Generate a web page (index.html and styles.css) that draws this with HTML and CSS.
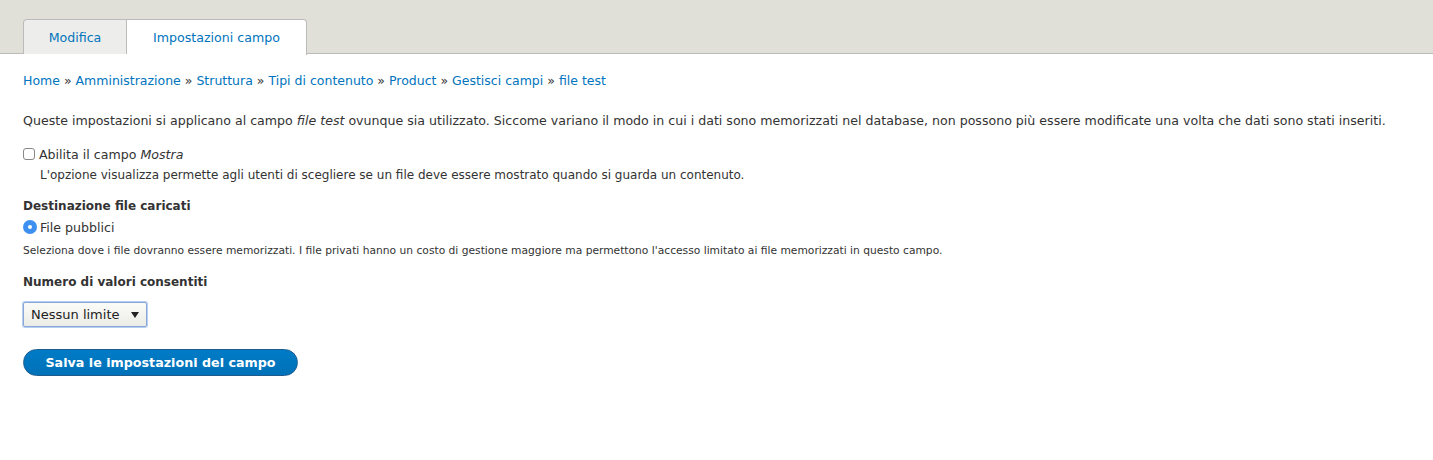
FILE: index.html
```html
<!DOCTYPE html>
<html lang="it">
<head>
<meta charset="utf-8">
<title>file test</title>
<link rel="stylesheet" href="styles.css">
</head>
<body>
<header class="head">
  <ul class="tabs">
    <li class="tab"><a href="#">Modifica</a></li>
    <li class="tab active"><a href="#">Impostazioni campo</a></li>
  </ul>
</header>
<main class="page">
  <nav class="crumbs"><a href="#">Home</a> » <a href="#">Amministrazione</a> » <a href="#">Struttura</a> » <a href="#">Tipi di contenuto</a> » <a href="#">Product</a> » <a href="#">Gestisci campi</a> » <a href="#">file test</a></nav>
  <p class="intro">Queste impostazioni si applicano al campo <em>file test</em> ovunque sia utilizzato. Siccome variano il modo in cui i dati sono memorizzati nel database, non possono più essere modificate una volta che dati sono stati inseriti.</p>
  <div class="item">
    <label class="check"><span class="box"></span>Abilita il campo <em>Mostra</em></label>
    <div class="desc indent">L'opzione visualizza permette agli utenti di scegliere se un file deve essere mostrato quando si guarda un contenuto.</div>
  </div>
  <div class="item">
    <div class="title">Destinazione file caricati</div>
    <label class="check"><span class="radio"></span>File pubblici</label>
    <div class="desc small">Seleziona dove i file dovranno essere memorizzati. I file privati hanno un costo di gestione maggiore ma permettono l'accesso limitato ai file memorizzati in questo campo.</div>
  </div>
  <div class="item">
    <div class="title">Numero di valori consentiti</div>
    <div class="select"><span>Nessun limite</span><span class="caret"></span></div>
  </div>
  <button class="save" type="button">Salva le impostazioni del campo</button>
</main>
</body>
</html>
```
FILE: styles.css
```css
* { box-sizing: border-box; }
body {
  margin: 0;
  font-family: "DejaVu Sans", Verdana, sans-serif;
  font-size: 12.6px;
  color: #333;
  background: #fff;
}
a { color: #0074bd; text-decoration: none; }
.head {
  background: #e0e0d8;
  border-bottom: 1px solid #bbb;
  height: 54px;
  padding: 19px 23px 0;
}
.tabs {
  list-style: none;
  margin: 0;
  padding: 0;
  display: flex;
  height: 35px;
}
.tab a {
  display: block;
  width: 104px;
  text-align: center;
  height: 35px;
  line-height: 35px;
  background: #ededeb;
  border: 1px solid #bbb;
  border-bottom: none;
  border-radius: 4px 0 0 0;
  font-size: 12.6px;
}
.tab.active a {
  width: 180px;
  background: #fff;
  border-left: none;
  border-radius: 0 4px 0 0;
  height: 36px;
}
.page { padding: 18px 23px; }
.crumbs { line-height: 18px; font-size: 12.5px; }
.intro { margin: 22px 0 16px; line-height: 18px; }
.item { margin-bottom: 14px; }
.check { display: block; line-height: 18px; }
.box {
  display: inline-block;
  vertical-align: -1px;
  width: 12px; height: 12px;
  border: 1px solid #888;
  border-radius: 3px;
  background: #fff;
  margin-right: 4px;
}
.radio {
  display: inline-block;
  vertical-align: -2px;
  width: 14px; height: 14px;
  border-radius: 50%;
  background: #3d8ff0;
  margin-right: 3px;
  position: relative;
}
.radio::after {
  content: "";
  position: absolute;
  left: 5px; top: 5px;
  width: 4px; height: 4px;
  border-radius: 50%;
  background: #fff;
}
.desc { color: #333; font-size: 12px; line-height: 16px; margin-top: 3px; }
.desc.indent { padding-left: 17px; }
.desc.small { font-size: 10.7px; margin-top: 6px; }
.title { font-weight: bold; font-size: 12px; margin-bottom: 4px; line-height: 18px; }
.select {
  display: flex;
  justify-content: space-between;
  align-items: center;
  white-space: nowrap;
  margin-top: 11px;
  height: 25px;
  width: 124px;
  padding: 0 7px 0 7px;
  border: 1px solid #8aa6d6;
  box-shadow: 0 0 0 1px #b6cff2;
  border-radius: 2px;
  background: linear-gradient(#fbfbf9, #ecece6);
  font-size: 13px;
  color: #222;
}
.caret {
  border-left: 4px solid transparent;
  border-right: 4px solid transparent;
  border-top: 6px solid #222;
}
.save {
  margin-top: 8px;
  height: 27px;
  width: 275px;
  padding: 0;
  border: 1px solid #1e5c90;
  border-radius: 14px;
  background: linear-gradient(#007bc6, #0071b8);
  color: #fff;
  font-family: inherit;
  font-weight: bold;
  font-size: 12.7px;
}
```
